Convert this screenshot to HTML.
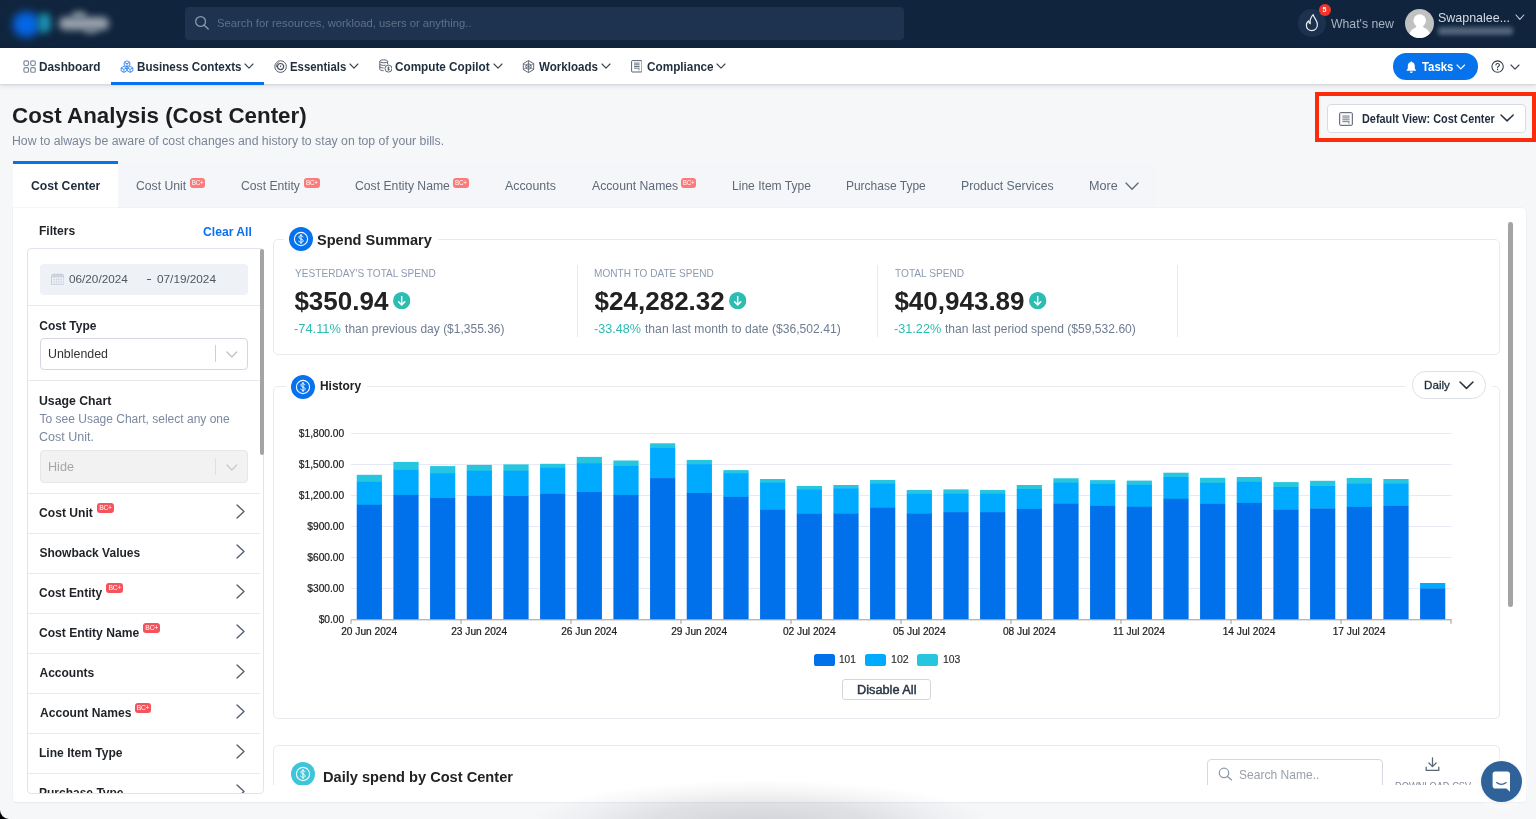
<!DOCTYPE html><html><head><meta charset="utf-8"><title>Cost Analysis</title><style>
*{box-sizing:border-box;margin:0;padding:0}
html,body{width:1536px;height:819px;overflow:hidden;font-family:"Liberation Sans",sans-serif}
body{position:relative;background:#f6f7f9;font-family:"Liberation Sans",sans-serif;-webkit-font-smoothing:antialiased}
#root{position:absolute;left:0;top:0;width:1536px;height:819px;overflow:hidden;will-change:transform}
.a,.t,svg{position:absolute}
.t{white-space:nowrap;display:block;transform-origin:0 0}
.bc{position:absolute;width:15.4px;height:10px;border-radius:3px;color:#fff;font-size:6.3px;line-height:10.4px;text-align:center;font-weight:400;letter-spacing:-.25px}
.hr{position:absolute;height:1px;background:#e6e9ee;left:28px;width:232px}
</style></head><body><div id="root">
<div class="a" style="left:0;top:0;width:1536px;height:48px;background:#10253d"></div>
<div class="a" style="left:13px;top:11.5px;width:27px;height:25px;border-radius:12px;background:#0566e6;filter:blur(4.4px)"></div>
<div class="a" style="left:38px;top:13px;width:13px;height:20px;border-radius:7px;background:#1b8fae;filter:blur(3.8px)"></div>
<div class="a" style="left:59px;top:16.5px;width:50px;height:13px;border-radius:6px;background:#98a1ad;filter:blur(3.6px)"></div>
<div class="a" style="left:72px;top:11px;width:14px;height:9px;border-radius:4px;background:#8d97a3;filter:blur(3.4px);opacity:.8"></div>
<div class="a" style="left:84px;top:26px;width:14px;height:8px;border-radius:4px;background:#8d97a3;filter:blur(3.4px);opacity:.6"></div>
<div class="a" style="left:185px;top:7px;width:719px;height:33px;border-radius:4px;background:#1e334f"></div>
<svg style="left:193px;top:14px" width="18" height="18" viewBox="0 0 18 18"><circle cx="7.6" cy="7.5" r="4.9" fill="none" stroke="#8b98aa" stroke-width="1.3"/><path d="M11.2 11.2L15.2 15" stroke="#8b98aa" stroke-width="1.4" stroke-linecap="round"/></svg>
<div class="a" style="left:1298px;top:9px;width:28px;height:28px;border-radius:14px;background:#1c314e"></div>
<svg style="left:1304px;top:13px" width="16" height="20" viewBox="0 0 16 20"><path d="M9.2 1.6C9.6 4.6 13.4 7.2 13.4 11.6C13.4 15.2 11 17.6 7.8 17.6C4.6 17.6 2.4 15.4 2.4 12.4C2.4 10.4 3.4 8.8 4.6 7.8C4.6 9.4 5.2 10.4 6.2 10.8C5.8 7.4 7.2 3.6 9.2 1.6Z" fill="none" stroke="#e9edf2" stroke-width="1.2" stroke-linejoin="round"/></svg>
<div class="a" style="left:1318.5px;top:4.3px;width:12px;height:12px;border-radius:6px;background:#f1352b;color:#fff;font-size:7px;line-height:12px;text-align:center;font-weight:700">5</div>
<svg style="left:1404.5px;top:8.5px" width="29" height="29" viewBox="0 0 29 29"><defs><clipPath id="av"><circle cx="14.5" cy="14.5" r="14.5"/></clipPath></defs><circle cx="14.5" cy="14.5" r="14.5" fill="#c1c1c1"/><g clip-path="url(#av)" fill="#fff"><circle cx="14.7" cy="11.6" r="6.3"/><rect x="11.2" y="14" width="7" height="6"/><ellipse cx="14.7" cy="27.4" rx="10.6" ry="9.6"/></g></svg>
<svg style="left:1513.80px;top:13.15px" width="11.80" height="8.30" viewBox="-2 -2 11.80 8.30"><path d="M0 0L3.90 4.30L7.80 0" fill="none" stroke="#c3ccd7" stroke-width="1.1" stroke-linecap="round" stroke-linejoin="round"/></svg>
<div class="a" style="left:1438px;top:26.5px;width:75px;height:8.5px;border-radius:3px;background:#64758a;filter:blur(2px);opacity:.8"></div>
<div class="a" style="left:0;top:48px;width:1536px;height:36px;background:#fff;box-shadow:0 1px 2px rgba(20,30,50,.10),0 3px 5px rgba(20,30,50,.08)"></div>
<div class="a" style="left:111px;top:82.2px;width:153px;height:2.6px;background:#0672ec"></div>
<svg style="left:22.6px;top:59.6px" width="13.4" height="13.4" viewBox="0 0 13.4 13.4"><g fill="none" stroke="#7d8897" stroke-width="1.15"><rect x=".9" y=".9" width="4.6" height="4.6" rx="1.4"/><rect x="7.7" y=".9" width="4.6" height="4.6" rx="1.4"/><rect x=".9" y="7.7" width="4.6" height="4.6" rx="1.4"/><rect x="7.7" y="7.7" width="4.6" height="4.6" rx="1.4"/></g></svg>
<svg style="left:120.4px;top:60.1px" width="14" height="13.6" viewBox="0 0 14 13.6"><g fill="none" stroke="#3a8af3" stroke-width=".95" stroke-linejoin="round"><path d="M7 .8L9.8 2.3V5.3L7 6.8L4.2 5.3V2.3ZM4.2 2.3L7 3.8L9.8 2.3M7 3.8V6.8"/><path d="M3.9 6.4L6.7 7.9V10.9L3.9 12.4L1.1 10.9V7.9ZM1.1 7.9L3.9 9.4L6.7 7.9M3.9 9.4V12.4"/><path d="M10.1 6.4L12.9 7.9V10.9L10.1 12.4L7.3 10.9V7.9ZM7.3 7.9L10.1 9.4L12.9 7.9M10.1 9.4V12.4"/></g></svg>
<svg style="left:243.30px;top:62.00px" width="12.00" height="8.20" viewBox="-2 -2 12.00 8.20"><path d="M0 0L4.00 4.20L8.00 0" fill="none" stroke="#3b4656" stroke-width="1.15" stroke-linecap="round" stroke-linejoin="round"/></svg>
<svg style="left:273.6px;top:59.6px" width="13.2" height="13.2" viewBox="-6.6 -6.6 13.2 13.2"><g fill="none" stroke="#47525f" stroke-width=".95"><circle r="5.8"/><path d="M-4.3 .6A4.3 4.3 0 0 1 -1.5 -4" stroke-width=".8"/><circle r="3.1" stroke-width="1.2"/><path d="M0 -1.2V.5" stroke-width="1"/></g></svg>
<svg style="left:348.40px;top:62.00px" width="11.90" height="8.20" viewBox="-2 -2 11.90 8.20"><path d="M0 0L3.95 4.20L7.90 0" fill="none" stroke="#3b4656" stroke-width="1.15" stroke-linecap="round" stroke-linejoin="round"/></svg>
<svg style="left:378.6px;top:59.2px" width="13.6" height="14" viewBox="0 0 13.6 14"><g fill="none" stroke="#4d5868" stroke-width=".9"><ellipse cx="4.7" cy="2.3" rx="3.9" ry="1.5"/><path d="M.8 2.3V10.2C.8 11 2.5 11.7 4.7 11.7M8.6 2.3V5.4M.8 4.9C.8 5.7 2.5 6.4 4.7 6.4C5.4 6.4 6 6.3 6.5 6.2M.8 7.5C.8 8.3 2.5 9 4.7 9"/><circle cx="9.5" cy="9.6" r="3.5" fill="#fff"/><path d="M9.5 7.6V11.6M10.5 8.6C10.2 8.2 8.6 8.1 8.6 9C8.6 9.9 10.5 9.5 10.5 10.4C10.5 11.2 8.9 11.2 8.5 10.7" stroke-width=".8"/></g></svg>
<svg style="left:491.70px;top:62.00px" width="12.00" height="8.20" viewBox="-2 -2 12.00 8.20"><path d="M0 0L4.00 4.20L8.00 0" fill="none" stroke="#3b4656" stroke-width="1.15" stroke-linecap="round" stroke-linejoin="round"/></svg>
<svg style="left:522.2px;top:59.6px" width="13" height="13.2" viewBox="-6.5 -6.6 13 13.2"><g fill="none" stroke="#4d5868" stroke-width=".9" stroke-linejoin="round"><path d="M0 -6L5.2 -3V3L0 6L-5.2 3V-3Z"/><circle r="2.7"/><path d="M0 -6V6M-5.2 -3L5.2 3M5.2 -3L-5.2 3" stroke-width=".7"/></g></svg>
<svg style="left:599.70px;top:62.00px" width="12.00" height="8.20" viewBox="-2 -2 12.00 8.20"><path d="M0 0L4.00 4.20L8.00 0" fill="none" stroke="#3b4656" stroke-width="1.15" stroke-linecap="round" stroke-linejoin="round"/></svg>
<svg style="left:630.8px;top:60px" width="11.6" height="12.6" viewBox="0 0 11.6 12.6"><g fill="none" stroke="#4d5868" stroke-width=".95"><rect x=".6" y=".6" width="10.4" height="11.4" rx=".8"/><path d="M3 3.1H8.6M3 4.8H8.6M3 6.5H8.6M3 8.2H8.6M7.4 9.8H8.6" stroke-width=".85"/></g></svg>
<svg style="left:714.90px;top:62.00px" width="12.00" height="8.20" viewBox="-2 -2 12.00 8.20"><path d="M0 0L4.00 4.20L8.00 0" fill="none" stroke="#3b4656" stroke-width="1.15" stroke-linecap="round" stroke-linejoin="round"/></svg>
<div class="a" style="left:1393px;top:53.3px;width:85.4px;height:26.4px;border-radius:13.2px;background:#0672ec"></div>
<svg style="left:1406.4px;top:60.6px" width="10.6" height="12.4" viewBox="0 0 10.6 12.4"><path d="M5.3 .4C5.9 .4 6.3 .8 6.3 1.3C7.9 1.8 8.8 3.2 8.8 5V7.4L10 9.2V9.8H.6V9.2L1.8 7.4V5C1.8 3.2 2.7 1.8 4.3 1.3C4.3 .8 4.7 .4 5.3 .4ZM3.9 10.5H6.7C6.7 11.4 6.1 12 5.3 12C4.5 12 3.9 11.4 3.9 10.5Z" fill="#fff"/></svg>
<svg style="left:1454.80px;top:62.85px" width="11.60" height="7.90" viewBox="-2 -2 11.60 7.90"><path d="M0 0L3.80 3.90L7.60 0" fill="none" stroke="#fff" stroke-width="1.15" stroke-linecap="round" stroke-linejoin="round"/></svg>
<svg style="left:1490.6px;top:60.4px" width="13.2" height="13.2" viewBox="-6.6 -6.6 13.2 13.2"><circle r="5.7" fill="none" stroke="#2f3a49" stroke-width="1.05"/><path d="M-1.7 -1.5C-1.7 -3.6 1.8 -3.6 1.8 -1.6C1.8 -.3 0 -.3 0 1.1" fill="none" stroke="#2f3a49" stroke-width="1.05" stroke-linecap="round"/><circle cy="3" r=".75" fill="#2f3a49"/></svg>
<svg style="left:1509.40px;top:62.70px" width="12.00" height="8.20" viewBox="-2 -2 12.00 8.20"><path d="M0 0L4.00 4.20L8.00 0" fill="none" stroke="#3b4656" stroke-width="1.15" stroke-linecap="round" stroke-linejoin="round"/></svg>
<div class="a" style="left:1315.2px;top:91.5px;width:220.8px;height:50.1px;border:4.3px solid #fb2b0c"></div>
<div class="a" style="left:1327px;top:104.2px;width:199.4px;height:28.6px;background:#fff;border:1px solid #d8dce2;border-radius:4px"></div>
<svg style="left:1339px;top:111.8px" width="14" height="14" viewBox="0 0 14 14"><g fill="none" stroke="#4a5463" stroke-width="1"><rect x=".7" y=".7" width="12.6" height="12.6" rx=".8"/><path d="M3.4 4H10.6M3.4 5.9H10.6M3.4 7.8H10.6M3.4 9.7H10.6M9.2 11H10.6" stroke-width=".8"/></g></svg>
<svg style="left:1499.20px;top:113.45px" width="16.20" height="9.90" viewBox="-2 -2 16.20 9.90"><path d="M0 0L6.10 5.90L12.20 0" fill="none" stroke="#27323f" stroke-width="1.45" stroke-linecap="round" stroke-linejoin="round"/></svg>
<div class="a" style="left:12.7px;top:164px;width:1143.5px;height:45.5px;background:#f5f6f9;border-bottom:1.5px solid #f1f4f7"></div>
<div class="a" style="left:12.7px;top:160.8px;width:105.5px;height:50px;background:#fff;border-top:3.4px solid #0672ec"></div>
<div class="bc" style="left:190px;top:177.9px;background:#fb7a7a">BC+</div>
<div class="bc" style="left:304.2px;top:177.9px;background:#fb7a7a">BC+</div>
<div class="bc" style="left:453.2px;top:177.9px;background:#fb7a7a">BC+</div>
<div class="bc" style="left:681px;top:177.9px;background:#fb7a7a">BC+</div>
<svg style="left:1123.80px;top:180.90px" width="16.10" height="10.20" viewBox="-2 -2 16.10 10.20"><path d="M0 0L6.05 6.20L12.10 0" fill="none" stroke="#5e6a79" stroke-width="1.3" stroke-linecap="round" stroke-linejoin="round"/></svg>
<div class="a" style="left:12.7px;top:208px;width:1513.6px;height:593.8px;background:#fff;border-radius:0 4px 4px 4px;box-shadow:0 0 0 .6px #eceef2,0 1px 1.5px rgba(30,40,60,.07)"></div>
<div class="a" style="left:1508.4px;top:221.6px;width:4.6px;height:385px;border-radius:2.3px;background:#a4a4a4"></div>
<div class="a" style="left:27.3px;top:248.2px;width:237.2px;height:545.6px;border:1px solid #e1e5eb;border-radius:4px;overflow:hidden" id="fbox"></div>
<div class="a" style="left:259.8px;top:248.6px;width:4.2px;height:206px;border-radius:2.1px;background:#a4a4a4"></div>
<div class="a" style="left:39.8px;top:264.2px;width:208px;height:30.4px;border-radius:4px;background:#eef1f5"></div>
<svg style="left:50.6px;top:272.6px" width="13.4" height="12.4" viewBox="0 0 13.4 12.4"><g fill="none" stroke="#c3c8d6" stroke-width=".9"><rect x=".5" y="1.6" width="12.4" height="10.2" rx=".8"/><path d="M.5 3.3H12.9" stroke-width="2.2" stroke="#cdd1dd"/><path d="M3.4 .3V2.4M6.7 .3V2.4M10 .3V2.4"/><path d="M2.6 6.4H10.8M2.6 8.2H10.8M2.6 10H10.8" stroke-dasharray="1.3 1" stroke-width="1.1" stroke="#c9cedb"/></g></svg>
<div class="a" style="left:147.2px;top:278.8px;width:3.7px;height:1.4px;background:#555b66"></div>
<div class="hr" style="top:305.0px;width:232px"></div>
<div class="hr" style="top:379.8px;width:232px"></div>
<div class="hr" style="top:492.7px"></div>
<div class="hr" style="top:532.7px"></div>
<div class="hr" style="top:572.7px"></div>
<div class="hr" style="top:612.7px"></div>
<div class="hr" style="top:652.7px"></div>
<div class="hr" style="top:692.7px"></div>
<div class="hr" style="top:732.7px"></div>
<div class="hr" style="top:772.7px"></div>
<div class="a" style="left:39.8px;top:337.6px;width:208px;height:32.4px;border:1px solid #d3d7de;border-radius:4px;background:#fff"></div>
<div class="a" style="left:214.6px;top:345px;width:1px;height:17.2px;background:#cfcfcf"></div>
<svg style="left:224.60px;top:349.90px" width="13.60" height="9.00" viewBox="-2 -2 13.60 9.00"><path d="M0 0L4.80 5.00L9.60 0" fill="none" stroke="#c4c4c4" stroke-width="1.5" stroke-linecap="round" stroke-linejoin="round"/></svg>
<div class="a" style="left:39.8px;top:450.4px;width:208px;height:32.4px;border:1px solid #e7e7e7;border-radius:4px;background:#f2f2f2"></div>
<div class="a" style="left:214.6px;top:458px;width:1px;height:17.2px;background:#e0e0e0"></div>
<svg style="left:224.60px;top:462.90px" width="13.60" height="9.00" viewBox="-2 -2 13.60 9.00"><path d="M0 0L4.80 5.00L9.60 0" fill="none" stroke="#cdcdcd" stroke-width="1.5" stroke-linecap="round" stroke-linejoin="round"/></svg>
<svg style="left:235.20px;top:502.50px" width="11.00" height="17.00" viewBox="-2 -2 11.00 17.00"><path d="M0 0L7.00 6.50L0 13.00" fill="none" stroke="#515d6e" stroke-width="1.35" stroke-linecap="round" stroke-linejoin="round"/></svg>
<svg style="left:235.20px;top:542.50px" width="11.00" height="17.00" viewBox="-2 -2 11.00 17.00"><path d="M0 0L7.00 6.50L0 13.00" fill="none" stroke="#515d6e" stroke-width="1.35" stroke-linecap="round" stroke-linejoin="round"/></svg>
<svg style="left:235.20px;top:582.50px" width="11.00" height="17.00" viewBox="-2 -2 11.00 17.00"><path d="M0 0L7.00 6.50L0 13.00" fill="none" stroke="#515d6e" stroke-width="1.35" stroke-linecap="round" stroke-linejoin="round"/></svg>
<svg style="left:235.20px;top:622.50px" width="11.00" height="17.00" viewBox="-2 -2 11.00 17.00"><path d="M0 0L7.00 6.50L0 13.00" fill="none" stroke="#515d6e" stroke-width="1.35" stroke-linecap="round" stroke-linejoin="round"/></svg>
<svg style="left:235.20px;top:662.50px" width="11.00" height="17.00" viewBox="-2 -2 11.00 17.00"><path d="M0 0L7.00 6.50L0 13.00" fill="none" stroke="#515d6e" stroke-width="1.35" stroke-linecap="round" stroke-linejoin="round"/></svg>
<svg style="left:235.20px;top:702.50px" width="11.00" height="17.00" viewBox="-2 -2 11.00 17.00"><path d="M0 0L7.00 6.50L0 13.00" fill="none" stroke="#515d6e" stroke-width="1.35" stroke-linecap="round" stroke-linejoin="round"/></svg>
<svg style="left:235.20px;top:742.50px" width="11.00" height="17.00" viewBox="-2 -2 11.00 17.00"><path d="M0 0L7.00 6.50L0 13.00" fill="none" stroke="#515d6e" stroke-width="1.35" stroke-linecap="round" stroke-linejoin="round"/></svg>
<div class="bc" style="left:97.1px;top:502.5px;width:16.8px;height:10.5px;font-size:6.8px;line-height:10.8px;background:#f5535c">BC+</div>
<div class="bc" style="left:106.4px;top:582.5px;width:16.8px;height:10.5px;font-size:6.8px;line-height:10.8px;background:#f5535c">BC+</div>
<div class="bc" style="left:143.3px;top:622.5px;width:16.8px;height:10.5px;font-size:6.8px;line-height:10.8px;background:#f5535c">BC+</div>
<div class="bc" style="left:134.6px;top:702.5px;width:16.8px;height:10.5px;font-size:6.8px;line-height:10.8px;background:#f5535c">BC+</div>
<div class="a" style="left:273px;top:239px;width:1226.8px;height:116.4px;border:1px solid #e7eaef;border-radius:5px"></div>
<div class="a" style="left:284px;top:236px;width:154px;height:6px;background:#fff"></div>
<svg style="left:288.50px;top:226.60px" width="24.0" height="24.0" viewBox="-12 -12 24 24"><circle r="12" fill="#0672ec"/><circle r="6.6" fill="none" stroke="#fff" stroke-width="1.1" opacity=".95"/><path d="M1.9 -2.1C1.6 -3 0.9 -3.4 0 -3.4C-1.2 -3.4 -2 -2.8 -2 -1.8C-2 -0.6 -0.9 -0.3 0 0C1 0.3 2.1 0.6 2.1 1.8C2.1 2.8 1.2 3.4 0 3.4C-1 3.4 -1.8 3 -2.1 2.1M0 -4.6V4.6" fill="none" stroke="#fff" stroke-width="1" stroke-linecap="round"/></svg>
<div class="a" style="left:577.0px;top:265px;width:1px;height:72px;background:#e7eaef"></div>
<div class="a" style="left:877.1px;top:265px;width:1px;height:72px;background:#e7eaef"></div>
<div class="a" style="left:1177.2px;top:265px;width:1px;height:72px;background:#e7eaef"></div>
<svg style="left:392.50px;top:291.70px" width="17.40" height="17.40" viewBox="-10 -10 20 20"><circle r="10" fill="#2bbdb1"/><path d="M0 -4.8V4.6M-3.6 1.2L0 4.8L3.6 1.2" fill="none" stroke="#fff" stroke-width="1.7" stroke-linecap="round" stroke-linejoin="round"/></svg>
<svg style="left:728.80px;top:291.70px" width="17.40" height="17.40" viewBox="-10 -10 20 20"><circle r="10" fill="#2bbdb1"/><path d="M0 -4.8V4.6M-3.6 1.2L0 4.8L3.6 1.2" fill="none" stroke="#fff" stroke-width="1.7" stroke-linecap="round" stroke-linejoin="round"/></svg>
<svg style="left:1029.20px;top:291.70px" width="17.40" height="17.40" viewBox="-10 -10 20 20"><circle r="10" fill="#2bbdb1"/><path d="M0 -4.8V4.6M-3.6 1.2L0 4.8L3.6 1.2" fill="none" stroke="#fff" stroke-width="1.7" stroke-linecap="round" stroke-linejoin="round"/></svg>
<div class="a" style="left:273px;top:385.6px;width:1226.8px;height:333.4px;border:1px solid #e7eaef;border-radius:5px"></div>
<div class="a" style="left:286px;top:383px;width:80.5px;height:6px;background:#fff"></div>
<div class="a" style="left:1404.6px;top:383px;width:87px;height:6px;background:#fff"></div>
<svg style="left:291.00px;top:374.50px" width="24.0" height="24.0" viewBox="-12 -12 24 24"><circle r="12" fill="#0672ec"/><circle r="6.6" fill="none" stroke="#fff" stroke-width="1.1" opacity=".95"/><path d="M1.9 -2.1C1.6 -3 0.9 -3.4 0 -3.4C-1.2 -3.4 -2 -2.8 -2 -1.8C-2 -0.6 -0.9 -0.3 0 0C1 0.3 2.1 0.6 2.1 1.8C2.1 2.8 1.2 3.4 0 3.4C-1 3.4 -1.8 3 -2.1 2.1M0 -4.6V4.6" fill="none" stroke="#fff" stroke-width="1" stroke-linecap="round"/></svg>
<div class="a" style="left:1411.6px;top:371.4px;width:74.4px;height:27.2px;border:1px solid #dcdfe5;border-radius:13.6px;background:#fff"></div>
<svg style="left:1457.90px;top:379.70px" width="17.00" height="10.40" viewBox="-2 -2 17.00 10.40"><path d="M0 0L6.50 6.40L13.00 0" fill="none" stroke="#27323f" stroke-width="1.5" stroke-linecap="round" stroke-linejoin="round"/></svg>
<svg style="left:0;top:420px" width="1536" height="215" viewBox="0 420 1536 215" shape-rendering="auto"><path d="M351 433.5H1451.5" stroke="#e7eaf4" stroke-width="1.2"/><path d="M351 464.5H1451.5" stroke="#e7eaf4" stroke-width="1.2"/><path d="M351 495.5H1451.5" stroke="#e7eaf4" stroke-width="1.2"/><path d="M351 526.5H1451.5" stroke="#e7eaf4" stroke-width="1.2"/><path d="M351 557.5H1451.5" stroke="#e7eaf4" stroke-width="1.2"/><path d="M351 588.5H1451.5" stroke="#e7eaf4" stroke-width="1.2"/><rect x="356.73" y="474.80" width="25.2" height="7.10" fill="#26c6e0"/><rect x="356.73" y="481.60" width="25.2" height="23.50" fill="#00aaff"/><rect x="356.73" y="504.80" width="25.2" height="114.70" fill="#0071eb"/><rect x="393.40" y="461.90" width="25.2" height="7.90" fill="#26c6e0"/><rect x="393.40" y="469.50" width="25.2" height="25.70" fill="#00aaff"/><rect x="393.40" y="494.90" width="25.2" height="124.60" fill="#0071eb"/><rect x="430.07" y="466.10" width="25.2" height="7.30" fill="#26c6e0"/><rect x="430.07" y="473.10" width="25.2" height="25.20" fill="#00aaff"/><rect x="430.07" y="498.00" width="25.2" height="121.50" fill="#0071eb"/><rect x="466.73" y="464.90" width="25.2" height="6.20" fill="#26c6e0"/><rect x="466.73" y="470.80" width="25.2" height="25.40" fill="#00aaff"/><rect x="466.73" y="495.90" width="25.2" height="123.60" fill="#0071eb"/><rect x="503.40" y="464.40" width="25.2" height="6.70" fill="#26c6e0"/><rect x="503.40" y="470.80" width="25.2" height="25.50" fill="#00aaff"/><rect x="503.40" y="496.00" width="25.2" height="123.50" fill="#0071eb"/><rect x="540.07" y="463.80" width="25.2" height="4.30" fill="#26c6e0"/><rect x="540.07" y="467.80" width="25.2" height="26.40" fill="#00aaff"/><rect x="540.07" y="493.90" width="25.2" height="125.60" fill="#0071eb"/><rect x="576.73" y="456.90" width="25.2" height="6.50" fill="#26c6e0"/><rect x="576.73" y="463.10" width="25.2" height="29.20" fill="#00aaff"/><rect x="576.73" y="492.00" width="25.2" height="127.50" fill="#0071eb"/><rect x="613.40" y="460.50" width="25.2" height="5.70" fill="#26c6e0"/><rect x="613.40" y="465.90" width="25.2" height="29.30" fill="#00aaff"/><rect x="613.40" y="494.90" width="25.2" height="124.60" fill="#0071eb"/><rect x="650.07" y="443.30" width="25.2" height="4.90" fill="#26c6e0"/><rect x="650.07" y="447.90" width="25.2" height="30.50" fill="#00aaff"/><rect x="650.07" y="478.10" width="25.2" height="141.40" fill="#0071eb"/><rect x="686.73" y="459.90" width="25.2" height="4.50" fill="#26c6e0"/><rect x="686.73" y="464.10" width="25.2" height="29.20" fill="#00aaff"/><rect x="686.73" y="493.00" width="25.2" height="126.50" fill="#0071eb"/><rect x="723.40" y="470.10" width="25.2" height="3.30" fill="#26c6e0"/><rect x="723.40" y="473.10" width="25.2" height="24.10" fill="#00aaff"/><rect x="723.40" y="496.90" width="25.2" height="122.60" fill="#0071eb"/><rect x="760.07" y="479.00" width="25.2" height="4.00" fill="#26c6e0"/><rect x="760.07" y="482.70" width="25.2" height="27.20" fill="#00aaff"/><rect x="760.07" y="509.60" width="25.2" height="109.90" fill="#0071eb"/><rect x="796.73" y="486.00" width="25.2" height="3.50" fill="#26c6e0"/><rect x="796.73" y="489.20" width="25.2" height="24.60" fill="#00aaff"/><rect x="796.73" y="513.50" width="25.2" height="106.00" fill="#0071eb"/><rect x="833.40" y="485.00" width="25.2" height="3.50" fill="#26c6e0"/><rect x="833.40" y="488.20" width="25.2" height="25.80" fill="#00aaff"/><rect x="833.40" y="513.70" width="25.2" height="105.80" fill="#0071eb"/><rect x="870.07" y="480.00" width="25.2" height="4.00" fill="#26c6e0"/><rect x="870.07" y="483.70" width="25.2" height="24.40" fill="#00aaff"/><rect x="870.07" y="507.80" width="25.2" height="111.70" fill="#0071eb"/><rect x="906.73" y="490.00" width="25.2" height="3.90" fill="#26c6e0"/><rect x="906.73" y="493.60" width="25.2" height="20.40" fill="#00aaff"/><rect x="906.73" y="513.70" width="25.2" height="105.80" fill="#0071eb"/><rect x="943.40" y="489.40" width="25.2" height="4.20" fill="#26c6e0"/><rect x="943.40" y="493.30" width="25.2" height="19.10" fill="#00aaff"/><rect x="943.40" y="512.10" width="25.2" height="107.40" fill="#0071eb"/><rect x="980.07" y="490.00" width="25.2" height="4.00" fill="#26c6e0"/><rect x="980.07" y="493.70" width="25.2" height="18.70" fill="#00aaff"/><rect x="980.07" y="512.10" width="25.2" height="107.40" fill="#0071eb"/><rect x="1016.73" y="485.00" width="25.2" height="4.30" fill="#26c6e0"/><rect x="1016.73" y="489.00" width="25.2" height="20.20" fill="#00aaff"/><rect x="1016.73" y="508.90" width="25.2" height="110.60" fill="#0071eb"/><rect x="1053.40" y="478.30" width="25.2" height="4.70" fill="#26c6e0"/><rect x="1053.40" y="482.70" width="25.2" height="21.40" fill="#00aaff"/><rect x="1053.40" y="503.80" width="25.2" height="115.70" fill="#0071eb"/><rect x="1090.07" y="480.10" width="25.2" height="4.10" fill="#26c6e0"/><rect x="1090.07" y="483.90" width="25.2" height="22.30" fill="#00aaff"/><rect x="1090.07" y="505.90" width="25.2" height="113.60" fill="#0071eb"/><rect x="1126.73" y="480.60" width="25.2" height="4.30" fill="#26c6e0"/><rect x="1126.73" y="484.60" width="25.2" height="22.50" fill="#00aaff"/><rect x="1126.73" y="506.80" width="25.2" height="112.70" fill="#0071eb"/><rect x="1163.40" y="472.70" width="25.2" height="4.60" fill="#26c6e0"/><rect x="1163.40" y="477.00" width="25.2" height="22.10" fill="#00aaff"/><rect x="1163.40" y="498.80" width="25.2" height="120.70" fill="#0071eb"/><rect x="1200.07" y="477.80" width="25.2" height="5.40" fill="#26c6e0"/><rect x="1200.07" y="482.90" width="25.2" height="21.30" fill="#00aaff"/><rect x="1200.07" y="503.90" width="25.2" height="115.60" fill="#0071eb"/><rect x="1236.73" y="477.00" width="25.2" height="4.90" fill="#26c6e0"/><rect x="1236.73" y="481.60" width="25.2" height="21.60" fill="#00aaff"/><rect x="1236.73" y="502.90" width="25.2" height="116.60" fill="#0071eb"/><rect x="1273.40" y="482.10" width="25.2" height="5.20" fill="#26c6e0"/><rect x="1273.40" y="487.00" width="25.2" height="23.10" fill="#00aaff"/><rect x="1273.40" y="509.80" width="25.2" height="109.70" fill="#0071eb"/><rect x="1310.07" y="480.80" width="25.2" height="5.50" fill="#26c6e0"/><rect x="1310.07" y="486.00" width="25.2" height="22.70" fill="#00aaff"/><rect x="1310.07" y="508.40" width="25.2" height="111.10" fill="#0071eb"/><rect x="1346.73" y="478.00" width="25.2" height="6.00" fill="#26c6e0"/><rect x="1346.73" y="483.70" width="25.2" height="23.50" fill="#00aaff"/><rect x="1346.73" y="506.90" width="25.2" height="112.60" fill="#0071eb"/><rect x="1383.40" y="479.00" width="25.2" height="5.00" fill="#26c6e0"/><rect x="1383.40" y="483.70" width="25.2" height="22.50" fill="#00aaff"/><rect x="1383.40" y="505.90" width="25.2" height="113.60" fill="#0071eb"/><rect x="1420.07" y="583.00" width="25.2" height="5.70" fill="#00aaff"/><rect x="1420.07" y="588.40" width="25.2" height="31.10" fill="#0071eb"/><path d="M351 619.8H1451.5M351.00 619.8V623.8M461.00 619.8V623.8M571.00 619.8V623.8M681.00 619.8V623.8M791.00 619.8V623.8M901.00 619.8V623.8M1011.00 619.8V623.8M1121.00 619.8V623.8M1231.00 619.8V623.8M1341.00 619.8V623.8M1451.00 619.8V623.8" fill="none" stroke="#9a9a9a" stroke-width="1"/></svg>
<div class="a" style="left:813.7px;top:653.8px;width:21.3px;height:12px;border-radius:2.6px;background:#0071eb"></div>
<div class="a" style="left:865.1px;top:653.8px;width:21.3px;height:12px;border-radius:2.6px;background:#00aaff"></div>
<div class="a" style="left:916.6px;top:653.8px;width:21.3px;height:12px;border-radius:2.6px;background:#26c6e0"></div>
<div class="a" style="left:842.2px;top:679px;width:88.6px;height:20.8px;border:1px solid #d3d6dc;border-radius:3px;background:#fff"></div>
<div class="a" id="clip" style="left:264px;top:740px;width:1250px;height:45.1px;overflow:hidden">
<div class="a" style="left:9px;top:5.4px;width:1226.8px;height:120px;border:1px solid #e7eaef;border-radius:5px"></div>
<svg style="left:27.30px;top:22.40px" width="24.0" height="24.0" viewBox="-12 -12 24 24"><circle r="12" fill="#3fc5d9"/><circle r="6.6" fill="none" stroke="#fff" stroke-width="1.1" opacity=".95"/><path d="M1.9 -2.1C1.6 -3 0.9 -3.4 0 -3.4C-1.2 -3.4 -2 -2.8 -2 -1.8C-2 -0.6 -0.9 -0.3 0 0C1 0.3 2.1 0.6 2.1 1.8C2.1 2.8 1.2 3.4 0 3.4C-1 3.4 -1.8 3 -2.1 2.1M0 -4.6V4.6" fill="none" stroke="#fff" stroke-width="1" stroke-linecap="round"/></svg>
<div class="a" style="left:943.3px;top:18.5px;width:175.6px;height:40px;border:1px solid #d5d9df;border-radius:4px"></div>
<svg style="left:952px;top:25px" width="18" height="18" viewBox="0 0 18 18"><circle cx="8" cy="7.9" r="4.7" fill="none" stroke="#8c98a8" stroke-width="1.25"/><path d="M11.4 11.4L15.4 14.8" stroke="#8c98a8" stroke-width="1.35" stroke-linecap="round"/></svg>
<svg style="left:1160.6px;top:16.6px" width="15" height="15" viewBox="0 0 15 15"><path d="M7.5 .9V9.4M3.9 6L7.5 9.6L11.1 6M1.2 10.2V13.4H13.8V10.2" fill="none" stroke="#5a6473" stroke-width="1.25" stroke-linecap="round" stroke-linejoin="round"/></svg>
<span class="t" id="c0" style="top:28px;font-size:15px;line-height:17px;color:#222222;font-weight:700;left:58.85px;transform:scaleX(0.9738);">Daily spend by Cost Center</span>
<span class="t" id="c1" style="top:27px;font-size:13px;line-height:15px;color:#9aa0a8;left:975.06px;transform:scaleX(0.9275);">Search Name..</span>
<span class="t" id="c2" style="top:40px;font-size:10.5px;line-height:12px;color:#7f8898;left:1130.76px;transform:scaleX(0.8822);">DOWNLOAD CSV</span>
</div>
<span class="t" id="t0" style="top:17px;font-size:11.5px;line-height:12px;color:#5f7187;left:216.99px;transform:scaleX(0.9786);">Search for resources, workload, users or anything..</span>
<span class="t" id="t1" style="top:16px;font-size:13px;line-height:15px;color:#a7b2c2;left:1331.24px;transform:scaleX(0.9423);">What's new</span>
<span class="t" id="t2" style="top:10px;font-size:13px;line-height:15px;color:#d3dae3;left:1437.74px;transform:scaleX(0.9585);">Swapnalee...</span>
<span class="t" id="t3" style="top:59px;font-size:13px;line-height:15px;color:#1f2d3d;font-weight:700;left:39.23px;transform:scaleX(0.9068);">Dashboard</span>
<span class="t" id="t4" style="top:59px;font-size:13px;line-height:15px;color:#1f2d3d;font-weight:700;left:137.15px;transform:scaleX(0.8933);">Business Contexts</span>
<span class="t" id="t5" style="top:59px;font-size:13px;line-height:15px;color:#1f2d3d;font-weight:700;left:290.16px;transform:scaleX(0.8757);">Essentials</span>
<span class="t" id="t6" style="top:59px;font-size:13px;line-height:15px;color:#1f2d3d;font-weight:700;left:395.33px;transform:scaleX(0.9029);">Compute Copilot</span>
<span class="t" id="t7" style="top:59px;font-size:13px;line-height:15px;color:#1f2d3d;font-weight:700;left:539.10px;transform:scaleX(0.8917);">Workloads</span>
<span class="t" id="t8" style="top:59px;font-size:13px;line-height:15px;color:#1f2d3d;font-weight:700;left:646.63px;transform:scaleX(0.9047);">Compliance</span>
<span class="t" id="t9" style="top:59px;font-size:13px;line-height:15px;color:#ffffff;font-weight:700;left:1421.59px;transform:scaleX(0.8743);">Tasks</span>
<span class="t" id="t10" style="top:103px;font-size:22px;line-height:25px;color:#1e1e1e;font-weight:700;left:12.01px;transform:scaleX(1.0156);">Cost Analysis (Cost Center)</span>
<span class="t" id="t11" style="top:134px;font-size:12px;line-height:14px;color:#798597;left:11.92px;transform:scaleX(1.0235);">How to always be aware of cost changes and history to stay on top of your bills.</span>
<span class="t" id="t12" style="top:112px;font-size:12px;line-height:14px;color:#1f2d3d;font-weight:700;left:1361.89px;transform:scaleX(0.9065);">Default View: Cost Center</span>
<span class="t" id="t13" style="top:179px;font-size:12px;line-height:14px;color:#1f2d3d;font-weight:700;left:30.81px;transform:scaleX(1.0196);">Cost Center</span>
<span class="t" id="t14" style="top:179px;font-size:12px;line-height:14px;color:#5e6a79;left:135.89px;transform:scaleX(1.0173);">Cost Unit</span>
<span class="t" id="t15" style="top:179px;font-size:12px;line-height:14px;color:#5e6a79;left:241.09px;transform:scaleX(1.0153);">Cost Entity</span>
<span class="t" id="t16" style="top:179px;font-size:12px;line-height:14px;color:#5e6a79;left:355.19px;transform:scaleX(1.0165);">Cost Entity Name</span>
<span class="t" id="t17" style="top:179px;font-size:12px;line-height:14px;color:#5e6a79;left:504.80px;transform:scaleX(1.0294);">Accounts</span>
<span class="t" id="t18" style="top:179px;font-size:12px;line-height:14px;color:#5e6a79;left:591.50px;transform:scaleX(1.0178);">Account Names</span>
<span class="t" id="t19" style="top:179px;font-size:12px;line-height:14px;color:#5e6a79;left:731.73px;transform:scaleX(1.0060);">Line Item Type</span>
<span class="t" id="t20" style="top:179px;font-size:12px;line-height:14px;color:#5e6a79;left:845.94px;">Purchase Type</span>
<span class="t" id="t21" style="top:179px;font-size:12px;line-height:14px;color:#5e6a79;left:960.92px;transform:scaleX(1.0208);">Product Services</span>
<span class="t" id="t22" style="top:179px;font-size:12px;line-height:14px;color:#5e6a79;left:1088.59px;transform:scaleX(1.0480);">More</span>
<span class="t" id="t23" style="top:224px;font-size:12px;line-height:14px;color:#1f2328;font-weight:700;left:39.02px;transform:scaleX(1.0046);">Filters</span>
<span class="t" id="t24" style="top:225px;font-size:12px;line-height:14px;color:#0a72ef;font-weight:700;left:203.21px;transform:scaleX(1.0124);">Clear All</span>
<span class="t" id="t25" style="top:273px;font-size:11.5px;line-height:12px;color:#4f5560;left:69.23px;transform:scaleX(1.0209);">06/20/2024</span>
<span class="t" id="t26" style="top:273px;font-size:11.5px;line-height:12px;color:#4f5560;left:156.93px;transform:scaleX(1.0245);">07/19/2024</span>
<span class="t" id="t27" style="top:319px;font-size:12px;line-height:14px;color:#1f2328;font-weight:700;left:39.32px;">Cost Type</span>
<span class="t" id="t28" style="top:347px;font-size:12px;line-height:14px;color:#333333;left:48.27px;transform:scaleX(1.0337);">Unblended</span>
<span class="t" id="t29" style="top:394px;font-size:12px;line-height:14px;color:#1f2328;font-weight:700;left:39.06px;transform:scaleX(1.0223);">Usage Chart</span>
<span class="t" id="t30" style="top:412px;font-size:12px;line-height:14px;color:#7b88a0;left:39.56px;">To see Usage Chart, select any one</span>
<span class="t" id="t31" style="top:430px;font-size:12px;line-height:14px;color:#7b88a0;left:39.17px;transform:scaleX(1.0431);">Cost Unit.</span>
<span class="t" id="t32" style="top:460px;font-size:12px;line-height:14px;color:#a6a6a6;left:48.19px;transform:scaleX(1.0508);">Hide</span>
<span class="t" id="t33" style="top:506px;font-size:12px;line-height:14px;color:#1f2328;font-weight:700;left:39.32px;transform:scaleX(1.0099);">Cost Unit</span>
<span class="t" id="t34" style="top:546px;font-size:12px;line-height:14px;color:#1f2328;font-weight:700;left:39.44px;">Showback Values</span>
<span class="t" id="t35" style="top:586px;font-size:12px;line-height:14px;color:#1f2328;font-weight:700;left:39.32px;transform:scaleX(0.9959);">Cost Entity</span>
<span class="t" id="t36" style="top:626px;font-size:12px;line-height:14px;color:#1f2328;font-weight:700;left:39.32px;transform:scaleX(1.0079);">Cost Entity Name</span>
<span class="t" id="t37" style="top:666px;font-size:12px;line-height:14px;color:#1f2328;font-weight:700;left:39.50px;">Accounts</span>
<span class="t" id="t38" style="top:706px;font-size:12px;line-height:14px;color:#1f2328;font-weight:700;left:39.50px;transform:scaleX(1.0080);">Account Names</span>
<span class="t" id="t39" style="top:746px;font-size:12px;line-height:14px;color:#1f2328;font-weight:700;left:39.02px;transform:scaleX(1.0054);">Line Item Type</span>
<span class="t" id="t41" style="top:231px;font-size:15px;line-height:17px;color:#222222;font-weight:700;left:317.31px;transform:scaleX(0.9705);">Spend Summary</span>
<span class="t" id="t42" style="top:267px;font-size:10.5px;line-height:12px;color:#8d9bb0;left:294.60px;transform:scaleX(0.9627);">YESTERDAY'S TOTAL SPEND</span>
<span class="t" id="t43" style="top:286px;font-size:26px;line-height:30px;color:#222222;font-weight:700;left:294.41px;">$350.94</span>
<span class="t" id="t44" style="top:322px;font-size:12px;line-height:14px;color:#2bbdb1;left:294.22px;transform:scaleX(1.0714);">-74.11%</span>
<span class="t" id="t45" style="top:322px;font-size:12px;line-height:14px;color:#6f7c91;left:345.07px;">than previous day ($1,355.36)</span>
<span class="t" id="t46" style="top:267px;font-size:10.5px;line-height:12px;color:#8d9bb0;left:594.19px;transform:scaleX(0.9593);">MONTH TO DATE SPEND</span>
<span class="t" id="t47" style="top:286px;font-size:26px;line-height:30px;color:#222222;font-weight:700;left:594.61px;">$24,282.32</span>
<span class="t" id="t48" style="top:322px;font-size:12px;line-height:14px;color:#2bbdb1;left:594.43px;transform:scaleX(1.0517);">-33.48%</span>
<span class="t" id="t49" style="top:322px;font-size:12px;line-height:14px;color:#6f7c91;left:644.82px;transform:scaleX(1.0117);">than last month to date ($36,502.41)</span>
<span class="t" id="t50" style="top:267px;font-size:10.5px;line-height:12px;color:#8d9bb0;left:894.60px;transform:scaleX(0.9665);">TOTAL SPEND</span>
<span class="t" id="t51" style="top:286px;font-size:26px;line-height:30px;color:#222222;font-weight:700;left:894.41px;">$40,943.89</span>
<span class="t" id="t52" style="top:322px;font-size:12px;line-height:14px;color:#2bbdb1;left:894.23px;transform:scaleX(1.0562);">-31.22%</span>
<span class="t" id="t53" style="top:322px;font-size:12px;line-height:14px;color:#6f7c91;left:945.22px;transform:scaleX(1.0073);">than last period spend ($59,532.60)</span>
<span class="t" id="t54" style="top:379px;font-size:12px;line-height:14px;color:#222222;font-weight:700;left:319.92px;transform:scaleX(0.9951);">History</span>
<span class="t" id="t55" style="top:379px;font-size:11.5px;line-height:12px;color:#1f2d3d;left:1423.87px;transform:scaleX(1.0135);-webkit-text-stroke:.3px #1f2d3d;">Daily</span>
<span class="t" id="t56" style="top:428px;font-size:10.2px;line-height:11px;color:#1c1c1c;right:1191.85px;-webkit-text-stroke:.22px #1c1c1c;">$1,800.00</span>
<span class="t" id="t57" style="top:459px;font-size:10.2px;line-height:11px;color:#1c1c1c;right:1191.85px;-webkit-text-stroke:.22px #1c1c1c;">$1,500.00</span>
<span class="t" id="t58" style="top:490px;font-size:10.2px;line-height:11px;color:#1c1c1c;right:1191.85px;-webkit-text-stroke:.22px #1c1c1c;">$1,200.00</span>
<span class="t" id="t59" style="top:521px;font-size:10.2px;line-height:11px;color:#1c1c1c;right:1191.84px;-webkit-text-stroke:.22px #1c1c1c;">$900.00</span>
<span class="t" id="t60" style="top:552px;font-size:10.2px;line-height:11px;color:#1c1c1c;right:1191.84px;-webkit-text-stroke:.22px #1c1c1c;">$600.00</span>
<span class="t" id="t61" style="top:583px;font-size:10.2px;line-height:11px;color:#1c1c1c;right:1191.84px;-webkit-text-stroke:.22px #1c1c1c;">$300.00</span>
<span class="t" id="t62" style="top:614px;font-size:10.2px;line-height:11px;color:#1c1c1c;right:1191.82px;-webkit-text-stroke:.22px #1c1c1c;">$0.00</span>
<span class="t" id="t63" style="top:626px;font-size:10.2px;line-height:11px;color:#1c1c1c;left:341.13px;-webkit-text-stroke:.22px #1c1c1c;">20 Jun 2024</span>
<span class="t" id="t64" style="top:626px;font-size:10.2px;line-height:11px;color:#1c1c1c;left:451.13px;-webkit-text-stroke:.22px #1c1c1c;">23 Jun 2024</span>
<span class="t" id="t65" style="top:626px;font-size:10.2px;line-height:11px;color:#1c1c1c;left:561.13px;-webkit-text-stroke:.22px #1c1c1c;">26 Jun 2024</span>
<span class="t" id="t66" style="top:626px;font-size:10.2px;line-height:11px;color:#1c1c1c;left:671.13px;-webkit-text-stroke:.22px #1c1c1c;">29 Jun 2024</span>
<span class="t" id="t67" style="top:626px;font-size:10.2px;line-height:11px;color:#1c1c1c;left:782.89px;-webkit-text-stroke:.22px #1c1c1c;">02 Jul 2024</span>
<span class="t" id="t68" style="top:626px;font-size:10.2px;line-height:11px;color:#1c1c1c;left:892.89px;-webkit-text-stroke:.22px #1c1c1c;">05 Jul 2024</span>
<span class="t" id="t69" style="top:626px;font-size:10.2px;line-height:11px;color:#1c1c1c;left:1002.89px;-webkit-text-stroke:.22px #1c1c1c;">08 Jul 2024</span>
<span class="t" id="t70" style="top:626px;font-size:10.2px;line-height:11px;color:#1c1c1c;left:1113.09px;-webkit-text-stroke:.22px #1c1c1c;">11 Jul 2024</span>
<span class="t" id="t71" style="top:626px;font-size:10.2px;line-height:11px;color:#1c1c1c;left:1222.71px;-webkit-text-stroke:.22px #1c1c1c;">14 Jul 2024</span>
<span class="t" id="t72" style="top:626px;font-size:10.2px;line-height:11px;color:#1c1c1c;left:1332.71px;-webkit-text-stroke:.22px #1c1c1c;">17 Jul 2024</span>
<span class="t" id="t73" style="top:654px;font-size:10.2px;line-height:11px;color:#2c2c2c;left:839.14px;transform:scaleX(0.9899);-webkit-text-stroke:.15px #2c2c2c;">101</span>
<span class="t" id="t74" style="top:654px;font-size:10.2px;line-height:11px;color:#2c2c2c;left:890.71px;transform:scaleX(1.0377);-webkit-text-stroke:.15px #2c2c2c;">102</span>
<span class="t" id="t75" style="top:654px;font-size:10.2px;line-height:11px;color:#2c2c2c;left:942.52px;transform:scaleX(1.0183);-webkit-text-stroke:.15px #2c2c2c;">103</span>
<span class="t" id="t76" style="top:683px;font-size:12px;line-height:14px;color:#2a3645;left:856.78px;transform:scaleX(1.0619);-webkit-text-stroke:.45px #2a3645;">Disable All</span>
<div class="a" style="left:28px;top:773px;width:232px;height:20.2px;overflow:hidden">
<span class="t" id="t40" style="top:13px;font-size:12px;line-height:14px;color:#1f2328;font-weight:700;left:11.02px;">Purchase Type</span>
<svg style="left:207.20px;top:9.50px" width="11.00" height="17.00" viewBox="-2 -2 11.00 17.00"><path d="M0 0L7.00 6.50L0 13.00" fill="none" stroke="#515d6e" stroke-width="1.35" stroke-linecap="round" stroke-linejoin="round"/></svg>
</div>
<div class="a" style="left:1481.2px;top:761px;width:41px;height:41px;border-radius:20.5px;background:#2f6298;box-shadow:0 0 10px 4px rgba(255,255,255,.85),0 1px 4px rgba(0,0,0,.18)"></div>
<svg style="left:1492.4px;top:770.8px" width="19" height="22" viewBox="0 0 19 22"><path d="M3.2 .6H15.4C16.9 .6 18 1.7 18 3.2V20.8L14.4 17.6H3.2C1.7 17.6 .6 16.5 .6 15V3.2C.6 1.7 1.7 .6 3.2 .6Z" fill="#fff"/><path d="M4.6 11.6C7.6 13.9 11.2 13.9 14.2 11.6" fill="none" stroke="#2f6298" stroke-width="1.2" stroke-linecap="round"/></svg>
<svg style="left:0;top:810px" width="9" height="9" viewBox="0 0 9 9"><path d="M0 0V9H9A9 9 0 0 1 0 0Z" fill="#000"/></svg>
<div class="a" style="left:530px;top:778px;width:460px;height:86px;background:radial-gradient(ellipse 50% 50% at 50% 52%,rgba(40,40,55,.17),rgba(40,40,55,.11) 45%,rgba(40,40,55,.03) 80%,rgba(40,40,55,0) 100%)"></div>
</div></body></html>
